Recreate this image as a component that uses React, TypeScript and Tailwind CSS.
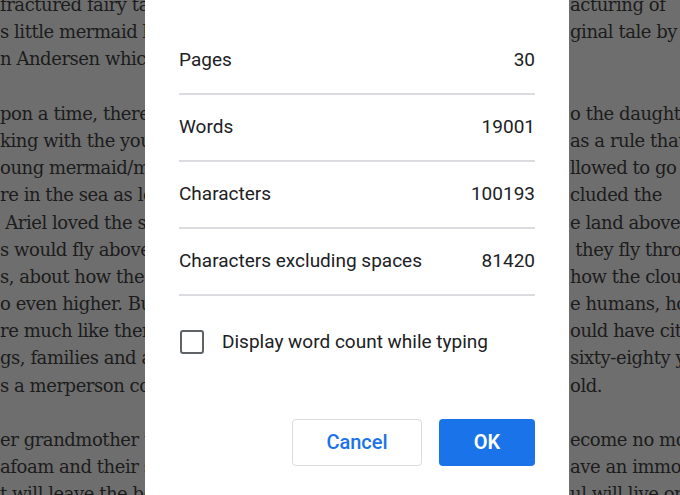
import React from "react";

const lines: [string, string][] = [
  ["fractured fairy tale", "acturing of"],
  ["s little mermaid by", "ginal tale by"],
  ["n Andersen which", ""],
  ["", ""],
  ["pon a time, there w", "o the daughter"],
  ["king with the young", "as a rule that"],
  ["oung mermaid/merman", "llowed to go"],
  ["re in the sea as long", "cluded the"],
  [" Ariel loved the sea", "e land above"],
  ["s would fly above the", " they fly thro"],
  ["s, about how the w", "how the cloud"],
  ["o even higher. But", "e humans, how"],
  ["re much like them", "ould have cit"],
  ["gs, families and a", "sixty-eighty y"],
  ["s a merperson could", "old."],
  ["", ""],
  ["er grandmother told", "ecome no mo"],
  ["afoam and their soul", "ave an immo"],
  ["t will leave the body", "ul will live on"],
];

const rows: [string, string][] = [
  ["Pages", "30"],
  ["Words", "19001"],
  ["Characters", "100193"],
  ["Characters excluding spaces", "81420"],
];

export default function App() {
  return (
    <div className="relative w-[680px] h-[495px] overflow-hidden bg-[#6e6e6e]">
      <div
        className="-mt-[9px] text-[18px] leading-[27.2px] tracking-[-0.45px] text-[#1c1c1c]"
        style={{ fontFamily: '"DejaVu Serif", serif' }}
      >
        {lines.map(([l, r], i) => (
          <div key={i} className="flex h-[27.2px] whitespace-pre">
            <div className="w-[145px] overflow-hidden">
              <span>{l}</span>
            </div>
            <div className="flex-1" />
            <div className="w-[111px] overflow-hidden pl-[1px]">
              <span>{r}</span>
            </div>
          </div>
        ))}
      </div>

      <div
        className="absolute left-[145px] top-0 w-[424px] h-[495px] bg-white px-[34px] pt-[28px] text-[#202124]"
        style={{ fontFamily: 'Roboto, "Noto Sans", sans-serif' }}
      >
        {rows.map(([k, v]) => (
          <div
            key={k}
            className="flex h-[67px] items-center justify-between border-b-2 border-[#dadce0] text-[19px]"
          >
            <span>{k}</span>
            <span>{v}</span>
          </div>
        ))}

        <div className="mt-[32px] flex items-center">
          <div className="w-[24px] h-[24px] border-2 border-[#5f6368] rounded-[3px] ml-[1px]" />
          <span className="ml-[18px] text-[19px]">Display word count while typing</span>
        </div>

        <div className="mt-[62px] flex justify-end gap-[17px]">
          <button className="w-[130px] h-[47px] border border-[#dadce0] rounded-[4px] text-[#1a73e8] text-[20px] font-medium bg-white">
            Cancel
          </button>
          <button className="w-[96px] h-[47px] rounded-[4px] bg-[#1a73e8] text-white text-[20px] font-semibold">
            OK
          </button>
        </div>
      </div>
    </div>
  );
}
